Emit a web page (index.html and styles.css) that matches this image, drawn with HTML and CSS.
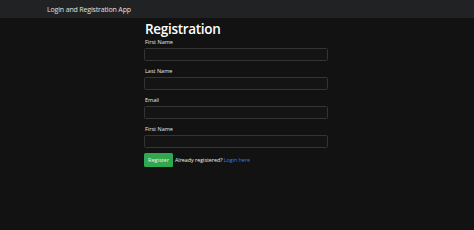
FILE: index.html
```html
<!DOCTYPE html>
<html>
<head>
<meta charset="utf-8">
<link rel="stylesheet" href="styles.css">
</head>
<body>
<nav class="navbar"><span class="brand">Login and Registration App</span></nav>
<main class="container">
  <h1 class="title">Registration</h1>
  <form class="form">
    <div class="field"><label class="label">First Name</label><input class="input" type="text"></div>
    <div class="field"><label class="label">Last Name</label><input class="input" type="text"></div>
    <div class="field"><label class="label">Email</label><input class="input" type="text"></div>
    <div class="field"><label class="label">First Name</label><input class="input" type="text"></div>
    <div class="actions">
      <button class="btn" type="button">Register</button>
      <span class="note">Already registered? <a class="link" href="#">Login here</a></span>
    </div>
  </form>
</main>
</body>
</html>
```
FILE: styles.css
```css
html, body { margin: 0; padding: 0; }
body {
  background: #121212;
  color: #e8e8e8;
  font-family: "Open Sans", "Noto Sans", sans-serif;
  width: 474px;
  height: 230px;
  overflow: hidden;
}
.navbar {
  height: 18px;
  background: #212224;
  display: flex;
  align-items: center;
  padding-left: 47px;
}
.brand {
  font-size: 7px;
  color: #e0e0e0;
  letter-spacing: -0.15px;
}
.container {
  width: 184px;
  margin-left: 144px;
}
.title {
  margin: 0;
  padding-top: 2px;
  font-size: 13.5px;
  font-weight: 600;
  letter-spacing: -0.3px;
  color: #ffffff;
  line-height: 18px;
  padding-left: 1px;
}
.form { display: flex; flex-direction: column; }
.field {
  display: flex;
  flex-direction: column;
  margin-bottom: 6px;
}
.label {
  font-size: 5.5px;
  color: #e6e6e6;
  line-height: 7px;
  margin: 1px 0 2px 1px;
}
.input {
  box-sizing: border-box;
  height: 13px;
  width: 184px;
  background: #141414;
  border: 1px solid #333436;
  border-radius: 1.5px;
  margin: 0;
  padding: 0;
}
.actions {
  display: flex;
  align-items: center;
  gap: 2px;
  margin-top: -1px;
}
.btn {
  box-sizing: border-box;
  width: 29px;
  height: 14px;
  background: #2fa84f;
  border: none;
  border-radius: 1.5px;
  color: #f2f2f2;
  font-family: inherit;
  font-size: 5.5px;
  padding: 0;
}
.note {
  font-size: 5.3px;
  color: #f0f0f0;
}
.link {
  color: #3d7fd9;
  text-decoration: none;
}
```
